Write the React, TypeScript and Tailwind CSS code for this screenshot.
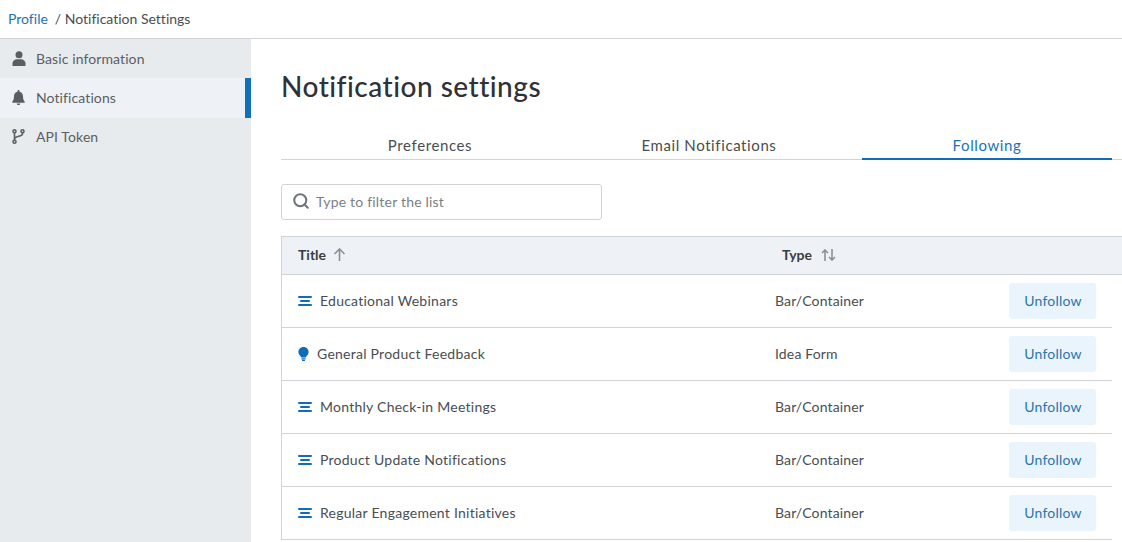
import { Search } from "lucide-react";

const rows = [
  { title: "Educational Webinars", type: "Bar/Container", icon: "bars" },
  { title: "General Product Feedback", type: "Idea Form", icon: "idea" },
  { title: "Monthly Check-in Meetings", type: "Bar/Container", icon: "bars" },
  { title: "Product Update Notifications", type: "Bar/Container", icon: "bars" },
  { title: "Regular Engagement Initiatives", type: "Bar/Container", icon: "bars" },
];

const BarsIcon = () => (
  <svg width="14" height="10" viewBox="0 0 14 10" className="shrink-0 text-[#0f6cb6]" fill="currentColor">
    <rect x="0" y="0" width="14" height="2" rx="1" />
    <rect x="2" y="4" width="10" height="2" rx="1" />
    <rect x="0" y="8" width="14" height="2" rx="1" />
  </svg>
);

const IdeaIcon = () => (
  <svg width="11" height="14" viewBox="0 0 11 14" className="shrink-0 text-[#0f6cb6]" fill="currentColor">
    <path d="M5.5 0C2.5 0 .4 2.200.4 4.900c0 1.900 1 3 1.800 3.900.5.6.8 1.100.9 1.700h4.800c.1-.6.4-1.100.9-1.700.8-.9 1.800-2 1.800-3.900C10.600 2.200 8.500 0 5.500 0z" />
    <rect x="3.300" y="11.200" width="4.400" height="1.200" rx="0.600" />
    <rect x="4" y="12.800" width="3" height="1.200" rx="0.600" />
  </svg>
);

const PersonIcon = () => (
  <svg width="14" height="15" viewBox="0 0 14 15" fill="currentColor" className="shrink-0">
    <circle cx="7" cy="3.700" r="3.500" />
    <path d="M0.500 15v-2.500C0.500 10 2.800 8.300 5 8.300h4c2.200 0 4.500 1.700 4.500 4.200V15z" />
  </svg>
);

const BellIcon = () => (
  <svg width="13" height="15" viewBox="0 0 13 15" fill="currentColor" className="shrink-0">
    <path d="M6.500 0c-.6 0-1 .4-1 1v.7C3.300 2.200 2 4 2 6.200c0 3-.7 4.200-1.700 5.300-.4.500-.1 1.200.6 1.200h11.200c.7 0 1-.7.6-1.200C11.700 10.400 11 9.200 11 6.200c0-2.200-1.300-4-3.500-4.500V1c0-.6-.4-1-1-1z" />
    <path d="M4.800 13.400h3.400c0 1-.8 1.600-1.700 1.600s-1.700-.6-1.700-1.600z" />
  </svg>
);

const BranchIcon = () => (
  <svg width="13" height="15" viewBox="0 0 13 15" fill="none" stroke="currentColor" strokeWidth="1.600" className="shrink-0">
    <circle cx="2.500" cy="2.300" r="1.500" />
    <circle cx="2.500" cy="12.700" r="1.500" />
    <circle cx="10.500" cy="2.300" r="1.500" />
    <path d="M2.500 3.800v7.400M10.500 3.800v1.200c0 2.800-8 1.800-8 5" />
  </svg>
);

const SortUpIcon = () => (
  <svg width="13" height="13" viewBox="0 0 13 13" fill="none" stroke="#8b9198" strokeWidth="1.600" className="shrink-0">
    <path d="M6.500 13V1M1.500 6l5-5 5 5" />
  </svg>
);

const SortIcon = () => (
  <svg width="15" height="12" viewBox="0 0 15 12" fill="none" stroke="#8b9198" strokeWidth="1.600" className="shrink-0">
    <path d="M4 12V1M1 4l3-3 3 3" />
    <path d="M11 0v11M8 8l3 3 3-3" />
  </svg>
);

const App = () => {
  return (
    <div className="h-[542px] w-[1122px] overflow-hidden bg-white font-['Lato',sans-serif] text-[14px] text-[#494d52] [font-variant-ligatures:none]">
      {/* Breadcrumb */}
      <div className="flex h-[39px] items-center border-b border-[#d0d3d8] pb-[2px] pl-2">
        <span className="text-[#1a73b8]">Profile</span>
        <span className="ml-[7px]">/ Notification Settings</span>
      </div>

      <div className="flex h-[503px]">
        {/* Sidebar */}
        <div className="w-[251px] shrink-0 bg-[#e8ebee] text-[#5a5e63]">
          <div className="flex h-[39px] items-center pl-3 tracking-[0.1px]">
            <PersonIcon />
            <span className="ml-[10px]">Basic information</span>
          </div>
          <div className="flex h-[40px] items-center border-r-[6px] border-[#1270b8] bg-[#eef2f6] pb-[2px] pl-3 tracking-[0.1px]">
            <BellIcon />
            <span className="ml-[11px]">Notifications</span>
          </div>
          <div className="flex h-[39px] items-center pb-[2px] pl-3 tracking-[0.1px]">
            <BranchIcon />
            <span className="ml-[11px]">API Token</span>
          </div>
        </div>

        {/* Main */}
        <div className="min-w-0 flex-1 pl-[30px]">
          <h1 className="mt-[28px] text-[28px] font-medium leading-[38px] tracking-[0.5px] text-[#2e3236]">
            Notification settings
          </h1>

          <div className="mt-[28px] flex h-[27px] w-[841px] border-b border-[#d0d3d8] pt-[1px] text-[15px] tracking-[0.6px]">
            <div className="w-[298px] text-center">Preferences</div>
            <div className="mr-[23px] w-[260px] text-center">Email Notifications</div>
            <div className="-mb-[1px] w-[250px] border-b-2 border-[#0f6cb6] text-center text-[#1a73b8]">
              Following
            </div>
          </div>

          <div className="mt-[24px] flex h-[36px] w-[321px] items-center rounded-[3px] border border-[#cfd2d7] pb-[2px] pl-[10px] text-[#7b7f85] tracking-[0.2px]">
            <Search size={18} strokeWidth={2.75} className="text-[#70757b]" />
            <span className="ml-[6px]">Type to filter the list</span>
          </div>

          <div className="mt-[16px] border-l border-[#d0d3d8]">
            <div className="flex h-[39px] items-center border-y border-[#d0d3d8] bg-[#eef1f5] pb-[2px] font-bold text-[#3a3e43]">
              <div className="flex w-[500px] items-center gap-[7px] pl-4">
                Title <SortUpIcon />
              </div>
              <div className="flex items-center gap-[9px]">
                Type <SortIcon />
              </div>
            </div>
            {rows.map((row) => (
              <div key={row.title} className="flex h-[53px] w-[830px] items-center border-b border-[#d0d3d8]">
                <div className="flex w-[493px] items-center gap-[8px] pl-4 tracking-[0.25px]">
                  {row.icon === "bars" ? <BarsIcon /> : <IdeaIcon />}
                  <span className="pb-[2px]">{row.title}</span>
                </div>
                <div className="w-[234px] pb-[2px] tracking-[0.15px]">{row.type}</div>
                <button className="flex h-[36px] w-[87px] items-center justify-center rounded-[3px] bg-[#eaf4fc] pb-[2px] pl-[1px] tracking-[0.2px] text-[#2a74b0]">
                  Unfollow
                </button>
              </div>
            ))}
          </div>
        </div>
      </div>
    </div>
  );
};

export default App;
